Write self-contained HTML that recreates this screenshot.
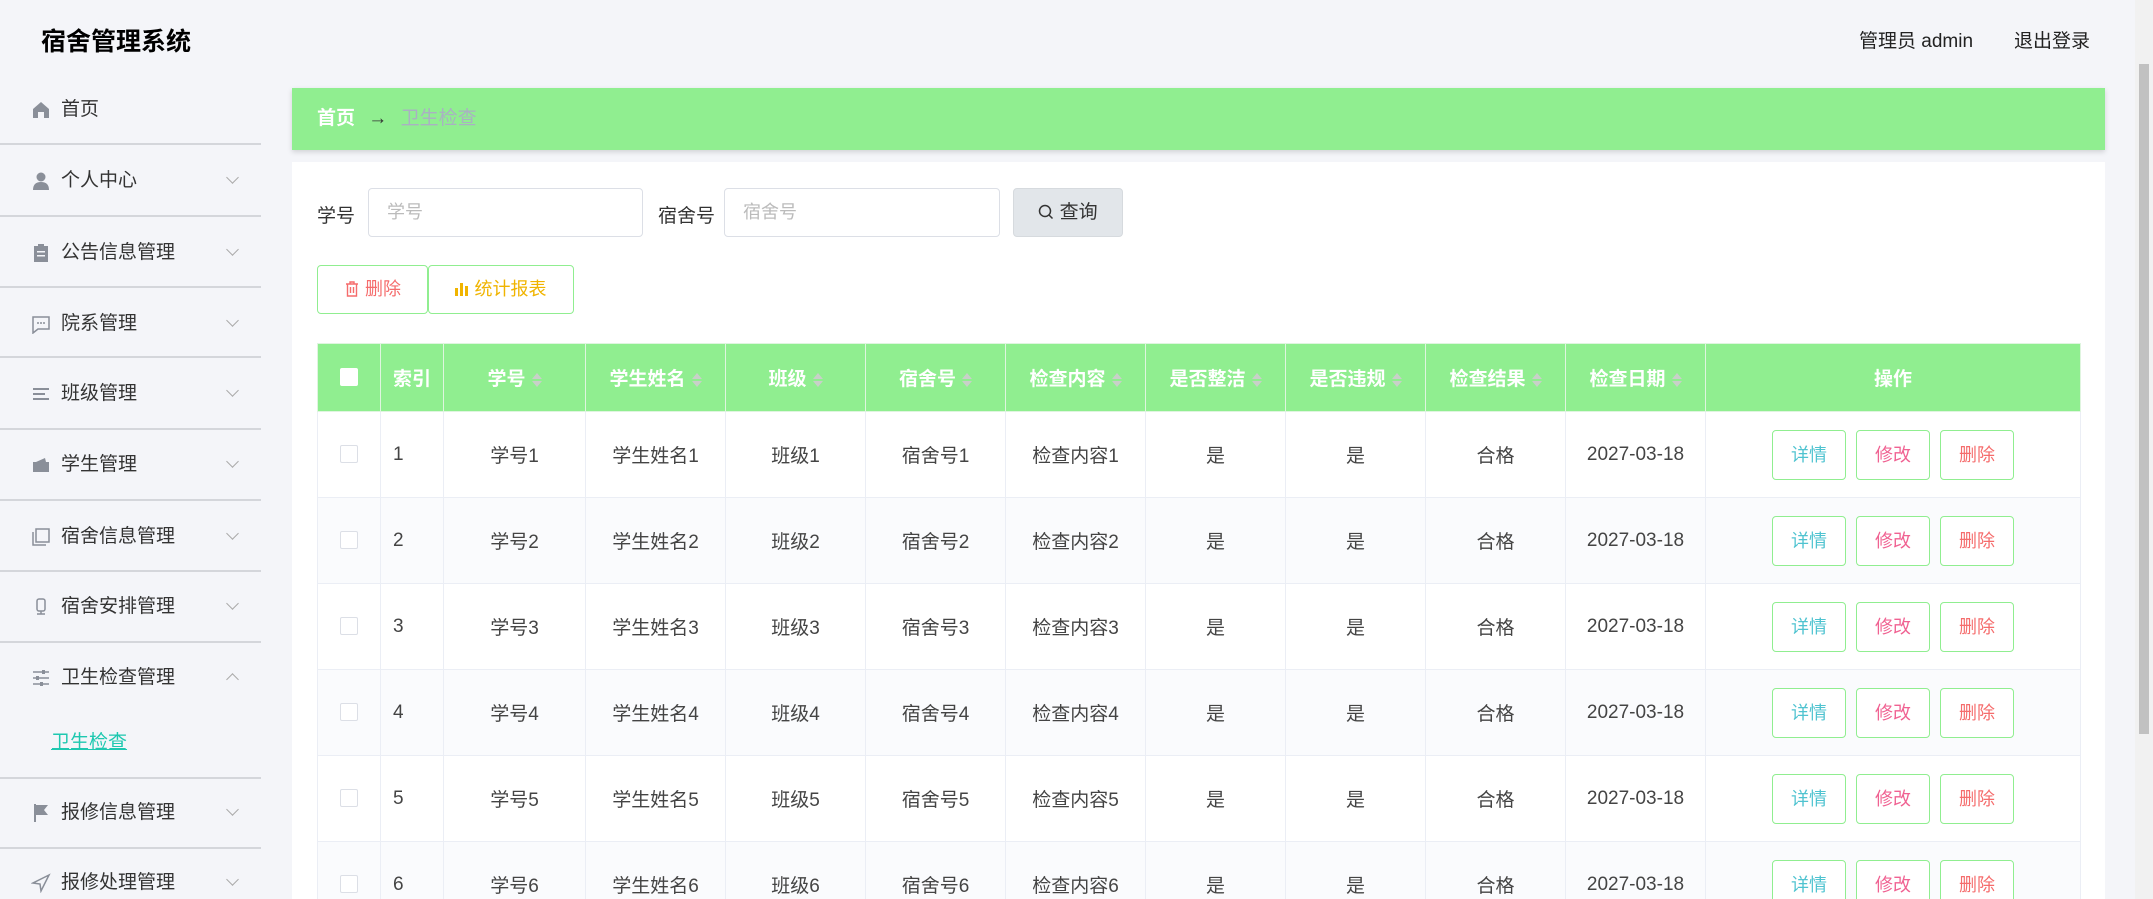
<!DOCTYPE html>
<html style="height:899px;overflow:hidden"><head><meta charset="utf-8"><style>
*{box-sizing:border-box;margin:0;padding:0}
body{width:2153px;height:899px;overflow:hidden;background:#f4f5f9;font-family:"Liberation Sans","Noto Sans CJK SC",sans-serif;color:#333;position:relative}
.abs{position:absolute}
.title{left:41px;top:22px;font-size:25px;font-weight:bold;color:#000}
.hr{top:26px;font-size:19px;color:#222}
.side{left:0;top:82px;width:261px}
.item{position:absolute;left:0;width:261px;height:30px;line-height:30px;font-size:19px;color:#333}
.item .ic{position:absolute;left:31px;top:5px;width:20px;height:20px;color:#8a8f99}
.item .tx{position:absolute;left:61px}
.item .ch{position:absolute;left:228px;width:9px;height:9px;border-right:1.5px solid #aaa;border-bottom:1.5px solid #aaa;transform:rotate(45deg)}
.div{position:absolute;left:0;width:261px;height:2px;background:#d4d6db}
.bc{left:292px;top:88px;width:1813px;height:62px;background:#90ee90;box-shadow:0 2px 5px rgba(0,0,0,.15);font-size:19px;line-height:62px;padding-left:25px}
.panel{left:292px;top:162px;width:1813px;height:737px;background:#fff}
.lab{font-size:19px;color:#333}
.inp{height:49px;border:1px solid #dcdfe6;border-radius:4px;background:#fff;font-size:18px;color:#bbb;line-height:47px;padding-left:18px}
.btn{border:1px solid #90ee90;border-radius:4px;background:#fff;font-size:18px;text-align:center}
.tw{position:absolute;left:317px;top:343px;width:1764px;height:556px;overflow:hidden}
table{border-collapse:collapse;table-layout:fixed;width:1764px;font-size:19px}
th{background:#90ee90;color:#fff;height:68px;border:1px solid #dff5df;font-weight:bold;text-align:center;vertical-align:middle}
td{height:86px;border:1px solid #ebeef5;text-align:center;color:#444;vertical-align:middle}
tr:nth-child(odd) td{background:#fafbfd}
.sort{display:inline-block;vertical-align:middle;margin-left:6px;width:10px;height:16px;position:relative}
.sort:before{content:"";position:absolute;left:0;top:-4px;border:5px solid transparent;border-bottom:6px solid #c8d0c8}
.sort:after{content:"";position:absolute;left:0;top:9px;border:5px solid transparent;border-top:6px solid #c8d0c8}
.cb{display:inline-block;width:18px;height:18px;border:1px solid #dcdfe6;border-radius:2px;background:#fff;vertical-align:middle}
.ob{display:inline-block;width:74px;height:50px;line-height:48px;border:1px solid #90ee90;border-radius:4px;margin:0 5px;font-size:18px;background:#fff;vertical-align:middle}
</style></head><body>
<div class="abs title">宿舍管理系统</div>
<div class="abs hr" style="left:1859px">管理员 admin</div>
<div class="abs hr" style="left:2014px">退出登录</div>

<div class="abs side" style="height:817px">
<div class="item" style="top:13px"><svg class="ic" viewBox="0 0 20 20"><path d="M2 9L10 2L18 9V18H13V12H7V18H2Z" fill="#8a8f99"/></svg><span class="tx">首页</span></div>
<div class="div" style="top:61px"></div>
<div class="item" style="top:84px"><svg class="ic" viewBox="0 0 20 20"><circle cx="10" cy="6" r="4.5" fill="#8a8f99"/><path d="M2 19Q2 11 10 11Q18 11 18 19Z" fill="#8a8f99"/></svg><span class="tx">个人中心</span><i class="ch" style="top:7px"></i></div>
<div class="div" style="top:133px"></div>
<div class="item" style="top:156px"><svg class="ic" viewBox="0 0 20 20"><rect x="3" y="3" width="14" height="16" fill="#8a8f99"/><rect x="7" y="1" width="6" height="4" fill="#8a8f99"/><rect x="6" y="8" width="8" height="1.5" fill="#f4f5f9"/><rect x="6" y="12" width="8" height="1.5" fill="#f4f5f9"/></svg><span class="tx">公告信息管理</span><i class="ch" style="top:7px"></i></div>
<div class="div" style="top:204px"></div>
<div class="item" style="top:227px"><svg class="ic" viewBox="0 0 20 20"><path d="M2 3H18V15H7L2 19Z" fill="none" stroke="#8a8f99" stroke-width="1.5"/><circle cx="7" cy="9" r="1" fill="#8a8f99"/><circle cx="10" cy="9" r="1" fill="#8a8f99"/><circle cx="13" cy="9" r="1" fill="#8a8f99"/></svg><span class="tx">院系管理</span><i class="ch" style="top:7px"></i></div>
<div class="div" style="top:274px"></div>
<div class="item" style="top:297px"><svg class="ic" viewBox="0 0 20 20"><rect x="2" y="4" width="16" height="2" fill="#8a8f99"/><rect x="2" y="9" width="12" height="2" fill="#8a8f99"/><rect x="2" y="14" width="16" height="2" fill="#8a8f99"/></svg><span class="tx">班级管理</span><i class="ch" style="top:7px"></i></div>
<div class="div" style="top:346px"></div>
<div class="item" style="top:368px"><svg class="ic" viewBox="0 0 20 20"><rect x="2" y="7" width="16" height="10" fill="#8a8f99"/><path d="M5 7L14 3L15 7" fill="#8a8f99"/></svg><span class="tx">学生管理</span><i class="ch" style="top:7px"></i></div>
<div class="div" style="top:417px"></div>
<div class="item" style="top:440px"><svg class="ic" viewBox="0 0 20 20"><rect x="5" y="2" width="13" height="13" fill="none" stroke="#8a8f99" stroke-width="1.5"/><path d="M2 5V18H15" fill="none" stroke="#8a8f99" stroke-width="1.5"/></svg><span class="tx">宿舍信息管理</span><i class="ch" style="top:7px"></i></div>
<div class="div" style="top:488px"></div>
<div class="item" style="top:510px"><svg class="ic" viewBox="0 0 20 20"><rect x="6" y="2" width="8" height="12" rx="2" fill="none" stroke="#8a8f99" stroke-width="1.5"/><path d="M6 17H14M10 14V17" stroke="#8a8f99" stroke-width="1.5"/></svg><span class="tx">宿舍安排管理</span><i class="ch" style="top:7px"></i></div>
<div class="div" style="top:559px"></div>
<div class="item" style="top:581px"><svg class="ic" viewBox="0 0 20 20"><path d="M2 4H18M2 10H18M2 16H18" stroke="#8a8f99" stroke-width="1.5"/><rect x="11" y="2" width="3" height="4" fill="#8a8f99"/><rect x="5" y="8" width="3" height="4" fill="#8a8f99"/><rect x="9" y="14" width="3" height="4" fill="#8a8f99"/></svg><span class="tx">卫生检查管理</span><i class="ch" style="top:12px;transform:rotate(-135deg)"></i></div>
<div class="item" style="top:646px;left:51px;color:#1ec8b0;text-decoration:underline">卫生检查</div>
<div class="div" style="top:695px"></div>
<div class="item" style="top:716px"><svg class="ic" viewBox="0 0 20 20"><path d="M4 1V19" stroke="#8a8f99" stroke-width="2"/><path d="M4 2H17L13 7L17 12H4Z" fill="#8a8f99"/></svg><span class="tx">报修信息管理</span><i class="ch" style="top:7px"></i></div>
<div class="div" style="top:765px"></div>
<div class="item" style="top:786px"><svg class="ic" viewBox="0 0 20 20"><path d="M18 2L2 10L9 11L10 18Z" fill="none" stroke="#8a8f99" stroke-width="1.5"/></svg><span class="tx">报修处理管理</span><i class="ch" style="top:7px"></i></div>
</div>

<div class="abs bc"><b style="color:#fff">首页</b> <span style="color:#333;margin:0 8px">→</span> <span style="color:#a9b1c2">卫生检查</span></div>
<div class="abs panel"></div>
<div class="abs lab" style="left:317px;top:201px">学号</div>
<div class="abs inp" style="left:368px;top:188px;width:275px">学号</div>
<div class="abs lab" style="left:658px;top:201px">宿舍号</div>
<div class="abs inp" style="left:724px;top:188px;width:276px">宿舍号</div>
<div class="abs" style="left:1013px;top:188px;width:110px;height:49px;background:#e2e6ea;border:1px solid #d6dade;border-radius:4px;font-size:19px;line-height:47px;text-align:center;color:#333">
<svg width="16" height="16" viewBox="0 0 16 16" style="vertical-align:-2px"><circle cx="7" cy="7" r="5.5" fill="none" stroke="#333" stroke-width="1.5"/><path d="M11 11L14.5 14.5" stroke="#333" stroke-width="1.5"/></svg> 查询</div>
<div class="abs btn" style="left:317px;top:265px;width:111px;height:49px;line-height:47px;color:#f56c6c">
<svg width="16" height="17" viewBox="0 0 16 17" style="vertical-align:-2px"><path d="M2 4H14M6 4V2H10V4M3.5 4V16H12.5V4M6.5 7V13M9.5 7V13" fill="none" stroke="#f56c6c" stroke-width="1.4"/></svg> 删除</div>
<div class="abs btn" style="left:428px;top:265px;width:146px;height:49px;line-height:47px;color:#f0b400">
<svg width="14" height="14" viewBox="0 0 14 14" style="vertical-align:-1px"><rect x="0" y="6" width="3" height="8" fill="#f0b400"/><rect x="5" y="1" width="3" height="13" fill="#f0b400"/><rect x="10" y="4" width="3" height="10" fill="#f0b400"/></svg> 统计报表</div>

<div class="tw"><table>
<colgroup><col style="width:63px"><col style="width:63px"><col style="width:142px"><col style="width:140px"><col style="width:140px"><col style="width:140px"><col style="width:140px"><col style="width:140px"><col style="width:140px"><col style="width:140px"><col style="width:140px"><col></colgroup>
<tr><th><span class="cb" style="border-color:#fff"></span></th><th style="text-align:left;padding-left:12px">索引</th><th>学号<i class="sort"></i></th><th>学生姓名<i class="sort"></i></th><th>班级<i class="sort"></i></th><th>宿舍号<i class="sort"></i></th><th>检查内容<i class="sort"></i></th><th>是否整洁<i class="sort"></i></th><th>是否违规<i class="sort"></i></th><th>检查结果<i class="sort"></i></th><th>检查日期<i class="sort"></i></th><th>操作</th></tr>
<tr><td><span class="cb"></span></td><td style="text-align:left;padding-left:12px">1</td><td>学号1</td><td>学生姓名1</td><td>班级1</td><td>宿舍号1</td><td>检查内容1</td><td>是</td><td>是</td><td>合格</td><td>2027-03-18</td><td><span class="ob" style="color:#4fc3d0">详情</span><span class="ob" style="color:#f06292">修改</span><span class="ob" style="color:#f56c6c">删除</span></td></tr>
<tr><td><span class="cb"></span></td><td style="text-align:left;padding-left:12px">2</td><td>学号2</td><td>学生姓名2</td><td>班级2</td><td>宿舍号2</td><td>检查内容2</td><td>是</td><td>是</td><td>合格</td><td>2027-03-18</td><td><span class="ob" style="color:#4fc3d0">详情</span><span class="ob" style="color:#f06292">修改</span><span class="ob" style="color:#f56c6c">删除</span></td></tr>
<tr><td><span class="cb"></span></td><td style="text-align:left;padding-left:12px">3</td><td>学号3</td><td>学生姓名3</td><td>班级3</td><td>宿舍号3</td><td>检查内容3</td><td>是</td><td>是</td><td>合格</td><td>2027-03-18</td><td><span class="ob" style="color:#4fc3d0">详情</span><span class="ob" style="color:#f06292">修改</span><span class="ob" style="color:#f56c6c">删除</span></td></tr>
<tr><td><span class="cb"></span></td><td style="text-align:left;padding-left:12px">4</td><td>学号4</td><td>学生姓名4</td><td>班级4</td><td>宿舍号4</td><td>检查内容4</td><td>是</td><td>是</td><td>合格</td><td>2027-03-18</td><td><span class="ob" style="color:#4fc3d0">详情</span><span class="ob" style="color:#f06292">修改</span><span class="ob" style="color:#f56c6c">删除</span></td></tr>
<tr><td><span class="cb"></span></td><td style="text-align:left;padding-left:12px">5</td><td>学号5</td><td>学生姓名5</td><td>班级5</td><td>宿舍号5</td><td>检查内容5</td><td>是</td><td>是</td><td>合格</td><td>2027-03-18</td><td><span class="ob" style="color:#4fc3d0">详情</span><span class="ob" style="color:#f06292">修改</span><span class="ob" style="color:#f56c6c">删除</span></td></tr>
<tr><td><span class="cb"></span></td><td style="text-align:left;padding-left:12px">6</td><td>学号6</td><td>学生姓名6</td><td>班级6</td><td>宿舍号6</td><td>检查内容6</td><td>是</td><td>是</td><td>合格</td><td>2027-03-18</td><td><span class="ob" style="color:#4fc3d0">详情</span><span class="ob" style="color:#f06292">修改</span><span class="ob" style="color:#f56c6c">删除</span></td></tr>
</table></div>

<div class="abs" style="left:2135px;top:0;width:18px;height:899px;background:#f1f1f1"></div>
<div class="abs" style="left:2139px;top:64px;width:10px;height:670px;background:#c1c1c1"></div>
</body></html>
